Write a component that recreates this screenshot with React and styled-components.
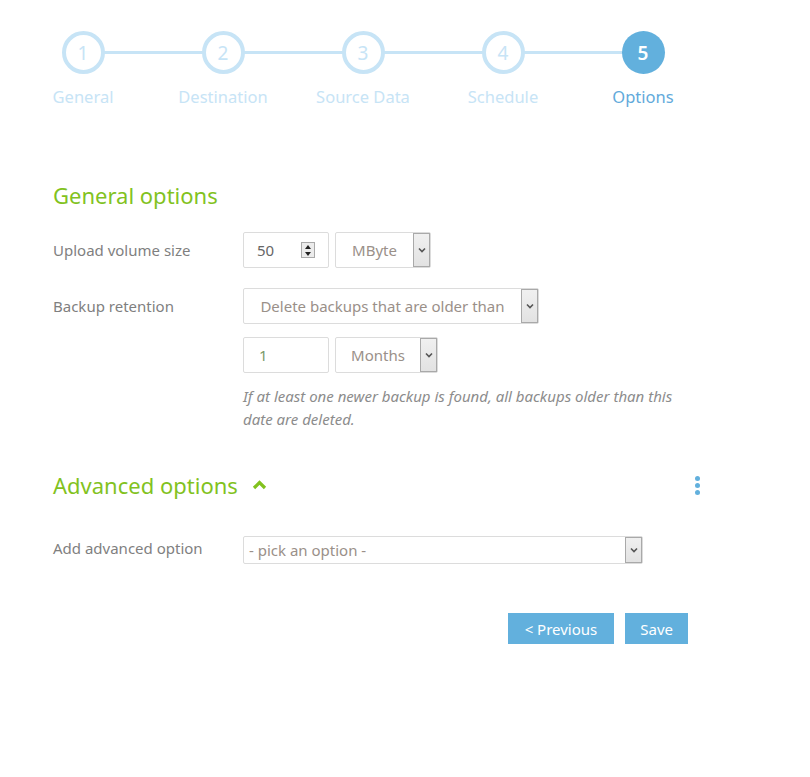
import React from 'react';
import styled, { createGlobalStyle } from 'styled-components';

const GlobalStyle = createGlobalStyle`
  html, body {
    margin: 0;
    padding: 0;
    background: #fff;
  }
  body {
    font-family: 'Noto Sans', 'Open Sans', sans-serif;
    font-size: 15px;
    color: #7f7f7f;
  }
`;

const Page = styled.div`
  width: 810px;
  min-height: 777px;
  box-sizing: border-box;
  padding: 31px 0 0 0;
`;

const Stepper = styled.div`
  display: flex;
  padding-left: 13px;
`;

const Step = styled.div`
  position: relative;
  width: 140px;
  display: flex;
  flex-direction: column;
  align-items: center;

  &::before {
    content: '';
    display: ${p => (p.$first ? 'none' : 'block')};
    position: absolute;
    top: 20px;
    left: -70px;
    width: 140px;
    height: 3px;
    background: #c7e4f6;
  }
`;

const Circle = styled.div`
  position: relative;
  z-index: 1;
  width: 43px;
  height: 43px;
  box-sizing: border-box;
  border-radius: 50%;
  border: ${p => (p.$active ? 'none' : '4px solid #c7e4f6')};
  background: ${p => (p.$active ? '#62b0dd' : '#fff')};
  color: ${p => (p.$active ? '#fff' : '#c7e4f6')};
  display: flex;
  align-items: center;
  justify-content: center;
  font-size: 19px;
  font-weight: ${p => (p.$active ? 600 : 400)};
`;

const StepLabel = styled.div`
  margin-top: 11px;
  font-size: 16.5px;
  color: ${p => (p.$active ? '#62aadb' : '#c7e4f6')};
  white-space: nowrap;
`;

const Content = styled.div`
  padding: 0 0 0 53px;
  width: 647px;
`;

const SectionTitle = styled.h2`
  margin: 0;
  font-weight: 400;
  font-size: 22px;
  color: #82c21e;
  display: flex;
  align-items: center;
  gap: 14px;
`;

const SectionHeader = styled.div`
  display: flex;
  align-items: center;
  justify-content: space-between;
  margin-top: ${p => p.$top}px;
`;

const Row = styled.div`
  display: flex;
  align-items: flex-start;
  margin-top: ${p => p.$top}px;
`;

const Label = styled.div`
  width: 190px;
  flex-shrink: 0;
  line-height: ${p => p.$h || 36}px;
  color: #7f7f7f;
`;

const Fields = styled.div`
  display: flex;
  flex-direction: column;
  gap: 13px;
`;

const Inline = styled.div`
  display: flex;
  gap: 6px;
`;

const Input = styled.div`
  width: ${p => p.$w}px;
  height: 36px;
  box-sizing: border-box;
  border: 1px solid #dcdcdc;
  border-radius: 2px;
  padding: 0 0 0 ${p => p.$pad || 13}px;
  display: flex;
  align-items: center;
  justify-content: space-between;
  color: ${p => p.$color || '#666'};
`;

const Spinner = styled.div`
  width: 14px;
  height: 16px;
  box-sizing: border-box;
  margin-right: 13px;
  border: 1px solid #a9a9a9;
  background: #ececec;
  display: flex;
  flex-direction: column;
  align-items: center;
  justify-content: space-around;
`;

const SelectBox = styled.div`
  width: ${p => p.$w}px;
  height: ${p => p.$h || 36}px;
  box-sizing: border-box;
  border: 1px solid #dcdcdc;
  border-radius: 2px;
  display: flex;
  align-items: stretch;
  color: #9a9089;
`;

const SelectText = styled.div`
  flex: 1;
  display: flex;
  align-items: center;
  justify-content: ${p => (p.$left ? 'flex-start' : 'center')};
  padding-left: ${p => (p.$left ? '5px' : '0')};
  white-space: nowrap;
`;

const ArrowBox = styled.div`
  width: 17px;
  box-sizing: border-box;
  border: 1px solid #a9a9a9;
  background: linear-gradient(#f0f0f0, #e2e2e2);
  display: flex;
  align-items: center;
  justify-content: center;
`;

const Hint = styled.p`
  margin: 12px 0 0 0;
  width: 450px;
  font-style: italic;
  line-height: 23px;
  color: #8c8c8c;
`;

const Kebab = styled.div`
  display: flex;
  flex-direction: column;
  gap: 2px;

  span {
    width: 5px;
    height: 5px;
    border-radius: 50%;
    background: #62b0dd;
  }
`;

const Buttons = styled.div`
  display: flex;
  justify-content: flex-end;
  gap: 11px;
  margin-top: 49px;
  padding-right: 12px;
`;

const Button = styled.button`
  height: 31px;
  padding: 0 ${p => p.$pad}px;
  border: none;
  border-radius: 0;
  background: #62b0dd;
  color: #fff;
  font-family: inherit;
  font-size: 15px;
`;

const Chevron = () => (
  <svg width="8" height="6" viewBox="0 0 8 6">
    <path d="M1 1.5 L4 4.5 L7 1.5" fill="none" stroke="#555" strokeWidth="1.6" />
  </svg>
);

const Select = ({ w, h, left, children }) => (
  <SelectBox $w={w} $h={h}>
    <SelectText $left={left}>{children}</SelectText>
    <ArrowBox>
      <Chevron />
    </ArrowBox>
  </SelectBox>
);

const steps = ['General', 'Destination', 'Source Data', 'Schedule', 'Options'];

export default function App() {
  return (
    <Page>
      <GlobalStyle />
      <Stepper>
        {steps.map((s, i) => (
          <Step key={s} $first={i === 0}>
            <Circle $active={i === 4}>{i + 1}</Circle>
            <StepLabel $active={i === 4}>{s}</StepLabel>
          </Step>
        ))}
      </Stepper>

      <Content>
        <SectionHeader $top={72}>
          <SectionTitle>General options</SectionTitle>
        </SectionHeader>

        <Row $top={22}>
          <Label>Upload volume size</Label>
          <Inline>
            <Input $w={86}>
              50
              <Spinner>
                <svg width="6" height="4" viewBox="0 0 6 4"><path d="M0 4 L3 0 L6 4 Z" fill="#222" /></svg>
                <svg width="6" height="4" viewBox="0 0 6 4"><path d="M0 0 L3 4 L6 0 Z" fill="#222" /></svg>
              </Spinner>
            </Input>
            <Select w={96}>MByte</Select>
          </Inline>
        </Row>

        <Row $top={20}>
          <Label>Backup retention</Label>
          <div>
            <Fields>
              <Select w={296}>Delete backups that are older than</Select>
              <Inline>
                <Input $w={86} $pad={15} $color="#7c9a68">1</Input>
                <Select w={103}>Months</Select>
              </Inline>
            </Fields>
            <Hint>
              If at least one newer backup is found, all backups older than this date are deleted.
            </Hint>
          </div>
        </Row>

        <SectionHeader $top={39}>
          <SectionTitle>
            Advanced options
            <svg width="15" height="10" viewBox="0 0 15 10">
              <path d="M2 8 L7.5 2.5 L13 8" fill="none" stroke="#82c21e" strokeWidth="3.2" />
            </svg>
          </SectionTitle>
          <Kebab>
            <span />
            <span />
            <span />
          </Kebab>
        </SectionHeader>

        <Row $top={36}>
          <Label $h={24}>Add advanced option</Label>
          <Select w={400} h={28} left>- pick an option -</Select>
        </Row>

        <Buttons>
          <Button $pad={17}>&lt; Previous</Button>
          <Button $pad={15}>Save</Button>
        </Buttons>
      </Content>
    </Page>
  );
}
